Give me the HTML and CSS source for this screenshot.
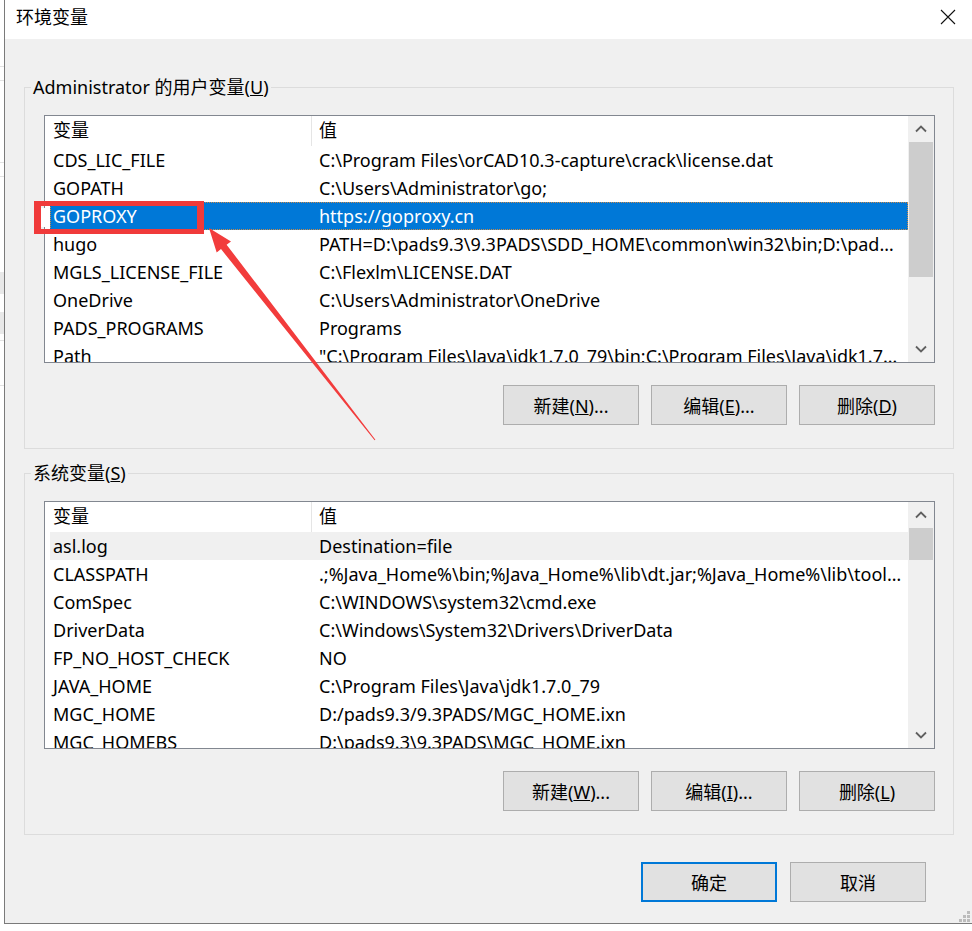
FILE: index.html
```html
<!DOCTYPE html>
<html lang="zh-CN">

<head>
     <meta charset="UTF-8">
     <meta name="viewport" content="width=device-width, initial-scale=1.0">
     <title>环境变量</title>
     <link rel="stylesheet" href="styles.css">
</head>

<body>

     <div class="screen">
          <div class="behind"></div>

          <div class="window">
               <div class="titlebar">
                    <span class="title">环境变量</span>
                    <svg class="close" width="16" height="16" viewBox="0 0 16 16">
                         <path d="M1 1L15 15M15 1L1 15" stroke="#111" stroke-width="1.1" fill="none" />
                    </svg>
               </div>

               <div class="client">
                    <!-- user variables -->
                    <fieldset class="group">
                         <legend>Administrator 的用户变量(<u>U</u>)</legend>
                         <div class="listview">
                              <div class="rows">
                                   <div class="row head"><span class="c1">变量</span><span class="c2">值</span></div>
                                   <div class="row"><span class="c1">CDS_LIC_FILE</span><span class="c2">C:\Program Files\orCAD10.3-capture\crack\license.dat</span></div>
                                   <div class="row"><span class="c1">GOPATH</span><span class="c2">C:\Users\Administrator\go;</span></div>
                                   <div class="row selected"><span class="c1">GOPROXY</span><span class="c2">https://goproxy.cn</span></div>
                                   <div class="row"><span class="c1">hugo</span><span class="c2">PATH=D:\pads9.3\9.3PADS\SDD_HOME\common\win32\bin;D:\pads9.3\9.3PADS\SDD_HOME\common\win32\lib</span></div>
                                   <div class="row"><span class="c1">MGLS_LICENSE_FILE</span><span class="c2">C:\Flexlm\LICENSE.DAT</span></div>
                                   <div class="row"><span class="c1">OneDrive</span><span class="c2">C:\Users\Administrator\OneDrive</span></div>
                                   <div class="row"><span class="c1">PADS_PROGRAMS</span><span class="c2">Programs</span></div>
                                   <div class="row"><span class="c1">Path</span><span class="c2">"C:\Program Files\Java\jdk1.7.0_79\bin;C:\Program Files\Java\jdk1.7.0_79\jre\bin"</span></div>
                              </div>
                              <div class="scrollbar">
                                   <div class="sb_btn">
                                        <svg width="12" height="8" viewBox="0 0 12 8"><path d="M1 6.5L6 1.5L11 6.5" stroke="#606060" stroke-width="1.8" fill="none" /></svg>
                                   </div>
                                   <div class="track"><div class="thumb thumb_user"></div></div>
                                   <div class="sb_btn">
                                        <svg width="12" height="8" viewBox="0 0 12 8"><path d="M1 1.5L6 6.5L11 1.5" stroke="#606060" stroke-width="1.8" fill="none" /></svg>
                                   </div>
                              </div>
                         </div>
                         <div class="buttons">
                              <button class="btn">新建(<u>N</u>)...</button>
                              <button class="btn">编辑(<u>E</u>)...</button>
                              <button class="btn">删除(<u>D</u>)</button>
                         </div>
                    </fieldset>

                    <!-- system variables -->
                    <fieldset class="group group_sys">
                         <legend>系统变量(<u>S</u>)</legend>
                         <div class="listview">
                              <div class="rows">
                                   <div class="row head"><span class="c1">变量</span><span class="c2">值</span></div>
                                   <div class="row hover"><span class="c1">asl.log</span><span class="c2">Destination=file</span></div>
                                   <div class="row"><span class="c1">CLASSPATH</span><span class="c2">.;%Java_Home%\bin;%Java_Home%\lib\dt.jar;%Java_Home%\lib\tools.jar</span></div>
                                   <div class="row"><span class="c1">ComSpec</span><span class="c2">C:\WINDOWS\system32\cmd.exe</span></div>
                                   <div class="row"><span class="c1">DriverData</span><span class="c2">C:\Windows\System32\Drivers\DriverData</span></div>
                                   <div class="row"><span class="c1">FP_NO_HOST_CHECK</span><span class="c2">NO</span></div>
                                   <div class="row"><span class="c1">JAVA_HOME</span><span class="c2">C:\Program Files\Java\jdk1.7.0_79</span></div>
                                   <div class="row"><span class="c1">MGC_HOME</span><span class="c2">D:/pads9.3/9.3PADS/MGC_HOME.ixn</span></div>
                                   <div class="row"><span class="c1">MGC_HOMEBS</span><span class="c2">D:\pads9.3\9.3PADS\MGC_HOME.ixn</span></div>
                              </div>
                              <div class="scrollbar">
                                   <div class="sb_btn">
                                        <svg width="12" height="8" viewBox="0 0 12 8"><path d="M1 6.5L6 1.5L11 6.5" stroke="#606060" stroke-width="1.8" fill="none" /></svg>
                                   </div>
                                   <div class="track"><div class="thumb thumb_sys"></div></div>
                                   <div class="sb_btn">
                                        <svg width="12" height="8" viewBox="0 0 12 8"><path d="M1 1.5L6 6.5L11 1.5" stroke="#606060" stroke-width="1.8" fill="none" /></svg>
                                   </div>
                              </div>
                         </div>
                         <div class="buttons">
                              <button class="btn">新建(<u>W</u>)...</button>
                              <button class="btn">编辑(<u>I</u>)...</button>
                              <button class="btn">删除(<u>L</u>)</button>
                         </div>
                    </fieldset>

                    <div class="footer">
                         <button class="btn btn_default">确定</button>
                         <button class="btn">取消</button>
                    </div>
               </div>

               <svg class="grip" width="12" height="12" viewBox="0 0 12 12">
                    <rect x="8" y="0" width="3" height="3" />
                    <rect x="4" y="4" width="3" height="3" />
                    <rect x="8" y="4" width="3" height="3" />
                    <rect x="0" y="8" width="3" height="3" />
                    <rect x="4" y="8" width="3" height="3" />
                    <rect x="8" y="8" width="3" height="3" />
               </svg>
          </div>

          <!-- screenshot annotation -->
          <div class="mark"></div>
          <svg class="arrow" width="972" height="931" viewBox="0 0 972 931">
               <polygon points="209,228 231,241.5 226.6,244.7 375.4,439.7 374.6,440.3 221,249.1 216.7,252.5" />
          </svg>
     </div>

</body>

</html>
```

FILE: styles.css
```css
* {
     box-sizing: border-box;
}

body {
     margin: 0;
     background: #fff;
     font-family: "Noto Sans", "Noto Sans CJK SC", sans-serif;
     font-size: 18px;
     color: #000;
}

.screen {
     position: relative;
     display: flex;
     width: 972px;
     height: 931px;
     overflow: hidden;
}

.behind {
     flex: none;
     width: 4px;
     height: 931px;
     background:
          linear-gradient(#e2e2e2, #e2e2e2) 0 66px / 4px 1px no-repeat,
          linear-gradient(#e2e2e2, #e2e2e2) 0 80px / 4px 1px no-repeat,
          linear-gradient(#e2e2e2, #e2e2e2) 0 162px / 4px 1px no-repeat,
          linear-gradient(#e2e2e2, #e2e2e2) 0 176px / 4px 1px no-repeat,
          linear-gradient(#e8e8e8, #e8e8e8) 0 272px / 4px 22px no-repeat,
          linear-gradient(#e8e8e8, #e8e8e8) 0 312px / 4px 22px no-repeat,
          linear-gradient(#e2e2e2, #e2e2e2) 0 340px / 4px 1px no-repeat,
          linear-gradient(#e2e2e2, #e2e2e2) 0 385px / 4px 1px no-repeat,
          #fff;
}

.window {
     position: relative;
     flex: 1;
     min-width: 0;
     height: 924px;
     border-left: 1px solid #7a7a7a;
     border-bottom: 1px solid #7a7a7a;
     background: #f0f0f0;
}

.titlebar {
     display: flex;
     align-items: center;
     justify-content: space-between;
     height: 39px;
     padding: 0 16px 5px 11px;
     background: #fff;
}

.title {
     line-height: 24px;
}

.client {
     padding: 36px 18px 0 19px;
}

.group {
     min-width: 0;
     margin: 0;
     padding: 16px 18px 23px 6px;
     border: 1px solid #dcdcdc;
}

.group legend {
     padding: 0 2px;
     line-height: 24px;
}

.group_sys {
     margin-top: 12px;
}

.listview {
     display: flex;
     height: 248px;
     margin-left: 13px;
     border: 1px solid #828790;
     background: #fff;
}

.rows {
     flex: 1;
     min-width: 0;
     padding-left: 5px;
     overflow: hidden;
}

.row {
     display: flex;
     height: 28px;
     line-height: 28px;
     white-space: nowrap;
}

.row .c1 {
     flex: none;
     width: 262px;
     padding-left: 3px;
     overflow: hidden;
}

.row .c2 {
     flex: 1;
     min-width: 0;
     padding: 0 6px 0 7px;
     overflow: hidden;
     text-overflow: ellipsis;
}

.row.head {
     height: 30px;
     line-height: 29px;
}

.row.head .c1 {
     border-right: 1px solid #e5e5e5;
}

.row.selected {
     background: #0078d7;
     color: #fff;
     outline: 1px dotted #c98a4a;
     outline-offset: -1px;
}

.row.hover {
     background: #f0f0f0;
}

.scrollbar {
     display: flex;
     flex: none;
     flex-direction: column;
     width: 26px;
     background: #f0f0f0;
}

.sb_btn {
     display: flex;
     align-items: center;
     justify-content: center;
     height: 26px;
}

.track {
     flex: 1;
}

.thumb {
     margin: 0 1px;
     background: #cdcdcd;
}

.thumb_user {
     height: 135px;
}

.thumb_sys {
     height: 32px;
}

.buttons {
     display: flex;
     justify-content: flex-end;
     gap: 12px;
     margin-top: 22px;
}

.btn {
     width: 136px;
     height: 40px;
     padding: 0;
     border: 1px solid #adadad;
     background: #e1e1e1;
     font-family: "Noto Sans", "Noto Sans CJK SC", sans-serif;
     font-size: 18px;
     color: #000;
}

.btn_default {
     border: 2px solid #0078d7;
}

.footer {
     display: flex;
     justify-content: flex-end;
     gap: 13px;
     margin-top: 27px;
     padding-right: 28px;
}

.grip {
     position: absolute;
     right: 1px;
     bottom: 0;
     fill: #bcbcbc;
}

.mark {
     position: absolute;
     left: 34px;
     top: 201px;
     width: 170px;
     height: 33px;
     border: solid #f03a3a;
     border-width: 5px 7px;
}

.mark::after {
     content: "";
     position: absolute;
     left: 0;
     top: 2px;
     width: 9px;
     height: 19px;
     background: #fff;
}

.arrow {
     position: absolute;
     left: 0;
     top: 0;
     fill: #f23c3c;
     pointer-events: none;
}
```
